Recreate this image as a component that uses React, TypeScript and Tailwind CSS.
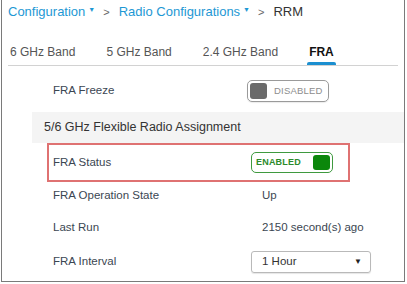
import React from 'react'

function Toggle({ on }: { on: boolean }) {
  if (on) {
    return (
      <div className="flex h-[21px] w-[82px] items-center justify-between rounded-[5px] border border-[#3f9a3f] pl-[4px] pr-[2px]">
        <span className="text-[9px] font-bold tracking-[0.2px] text-[#2b8a2b]">ENABLED</span>
        <span className="h-[15px] w-[17px] rounded-[3px] bg-[#0b870b]" />
      </div>
    )
  }
  return (
    <div className="flex h-[22px] w-[82px] items-center rounded-[5px] border border-[#9a9a9a] pl-[2px] shadow-[0_1px_1px_rgba(0,0,0,0.08)]">
      <span className="h-[16px] w-[17px] rounded-[3px] bg-[#6a6a6a]" />
      <span className="ml-[7px] text-[9.5px] tracking-[0.2px] text-[#8d8d8d]">DISABLED</span>
    </div>
  )
}

function Row({ label, height, children }: { label: string; height: string; children: React.ReactNode }) {
  return (
    <div className={`flex items-center pl-[21px] ${height}`}>
      <span className="w-[198px] text-[11.5px] text-[#3b4652]">{label}</span>
      {children}
    </div>
  )
}

export default function App() {
  return (
    <div className="h-[284px] w-[407px] bg-white" style={{ fontFamily: '"Liberation Sans", Arial, sans-serif' }}>
      <div className="ml-[1px] h-[282px] w-[404px] border-x border-b border-[#7a7a7a]">
        {/* Breadcrumb */}
        <div className="flex h-[24px] items-center pl-[6px] text-[13px]">
          <span className="text-[#1e98d4]">Configuration</span>
          <span className="ml-[3px] -mt-[4px] text-[7px] text-[#1e98d4]">▼</span>
          <span className="ml-[8px] text-[11px] text-[#666]">&gt;</span>
          <span className="ml-[9px] text-[#1e98d4]">Radio Configurations</span>
          <span className="ml-[3px] -mt-[4px] text-[7px] text-[#1e98d4]">▼</span>
          <span className="ml-[8px] text-[11px] text-[#666]">&gt;</span>
          <span className="ml-[9px] text-[#333]">RRM</span>
        </div>

        {/* Tabs */}
        <div className="mx-[6px] mt-[15px] flex h-[27px] gap-[27px] border-b border-[#d2d2d2]">
          {['6 GHz Band', '5 GHz Band', '2.4 GHz Band'].map(t => (
            <div key={t} className="flex items-center px-[2px] text-[12px] text-[#555]">{t}</div>
          ))}
          <div className="relative flex items-center px-[2px] text-[12px] font-bold text-[#111]">
            FRA
            <span className="absolute bottom-0 left-0 right-0 h-[3px] rounded-t-[2px] bg-[#1b8fd0]" />
          </div>
        </div>

        {/* Content */}
        <div className="mt-[8px] pl-[30px]">
          <Row label="FRA Freeze" height="h-[34px]">
            <div className="-ml-[4px]">
              <Toggle on={false} />
            </div>
          </Row>

          <div className="mt-[4px] flex h-[31px] items-center bg-[#f4f4f4] pl-[12px] text-[12.5px] text-[#333]">
            5/6 GHz Flexible Radio Assignment
          </div>

          <div className="ml-[15px] flex h-[39px] w-[303px] items-center border-2 border-[#df7272] pl-[4px]">
            <span className="w-[198px] text-[11.5px] text-[#3b4652]">FRA Status</span>
            <Toggle on={true} />
          </div>

          <Row label="FRA Operation State" height="h-[27px]">
            <span className="ml-[11px] text-[11.5px] text-[#3b4652]">Up</span>
          </Row>
          <Row label="Last Run" height="h-[38px]">
            <span className="ml-[11px] text-[11.5px] text-[#3b4652]">2150 second(s) ago</span>
          </Row>
          <Row label="FRA Interval" height="h-[30px]">
            <div className="flex h-[22px] w-[120px] items-center justify-between rounded-[3px] border border-[#b9b9b9] pl-[10px] pr-[8px] shadow-[0_1px_1px_rgba(0,0,0,0.1)]">
              <span className="text-[11.5px] text-[#333]">1 Hour</span>
              <span className="text-[8px] text-[#222]">▼</span>
            </div>
          </Row>
        </div>
      </div>
    </div>
  )
}
